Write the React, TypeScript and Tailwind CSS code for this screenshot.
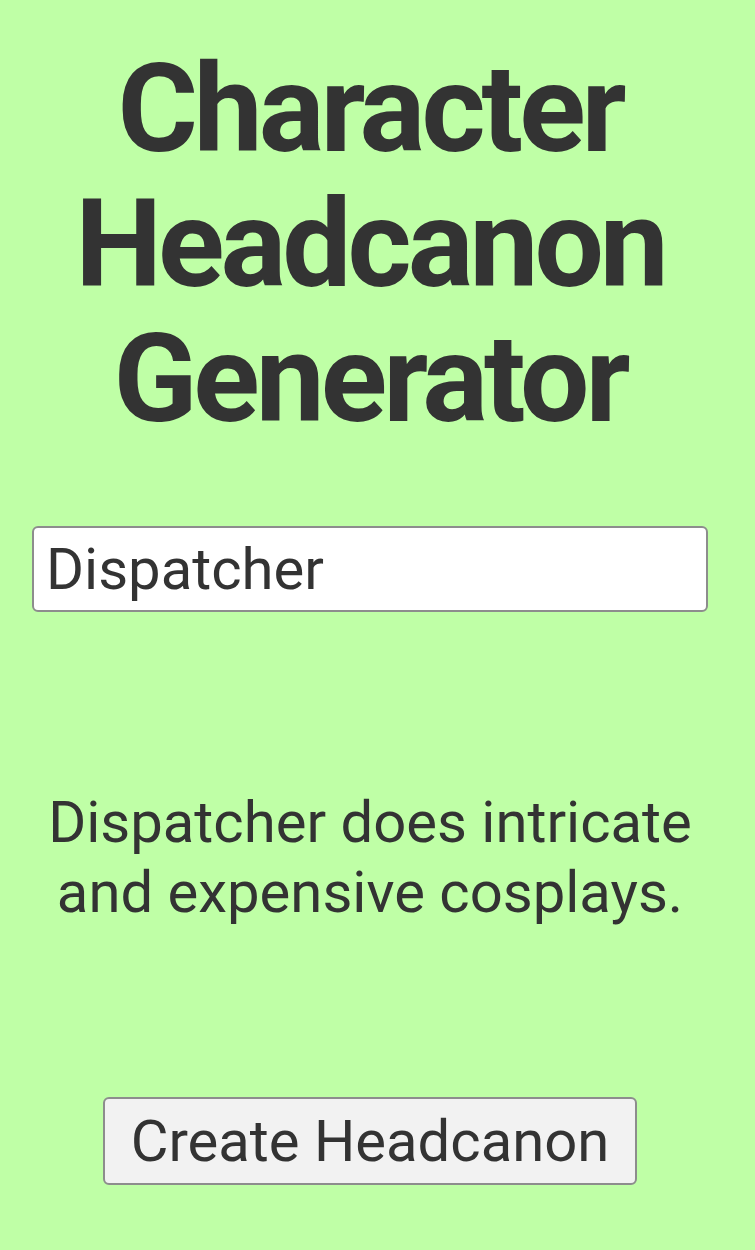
import React, { useState } from "react";

const App: React.FC = () => {
  const [name, setName] = useState("Dispatcher");

  return (
    <div className="min-h-[1250px] bg-[#bfffa6] font-['Roboto',sans-serif] text-[#333333]">
      <main className="w-[740px] flex flex-col items-center px-[32px]">
        <h1 className="mt-[42px] text-center text-[123px] leading-[135px] font-bold tracking-[-4px]">
          Character Headcanon Generator
        </h1>

        <input
          value={name}
          onChange={(e) => setName(e.target.value)}
          className="mt-[79px] w-full h-[86px] bg-white border-2 border-[#8d8d8d] rounded-[6px] px-[12px] text-[58px] text-[#333333] outline-none"
        />

        <p className="mt-[175px] text-center text-[58px] leading-[70px]">
          {name} does intricate and expensive cosplays.
        </p>

        <button className="mt-[170px] h-[88px] px-[26px] bg-[#f2f2f2] border-2 border-[#8d8d8d] rounded-[6px] text-[58px] leading-none">
          Create Headcanon
        </button>
      </main>
    </div>
  );
};

export default App;
